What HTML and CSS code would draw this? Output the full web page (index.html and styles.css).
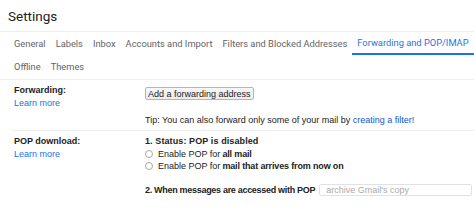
FILE: index.html
```html
<!DOCTYPE html>
<html lang="en">
<head>
<meta charset="UTF-8">
<link rel="stylesheet" href="styles.css">
<title>Settings</title>
</head>
<body>

<div class="title">Settings</div>

<nav class="tabs">
<div class="tabRow">
<a class="tab">General</a>
<a class="tab">Labels</a>
<a class="tab">Inbox</a>
<a class="tab">Accounts and Import</a>
<a class="tab">Filters and Blocked Addresses</a>
<a class="tab active">Forwarding and POP/IMAP</a>
</div>
<div class="tabRow second">
<a class="tab">Offline</a>
<a class="tab">Themes</a>
</div>
</nav>

<div class="section">
<div class="label">
<b>Forwarding:</b>
<a class="learn">Learn more</a>
</div>
<div class="content">
<button class="btn">Add a forwarding address</button>
<p class="tip">Tip: You can also forward only some of your mail by <a class="link">creating a filter!</a></p>
</div>
</div>

<div class="section">
<div class="label">
<b>POP download:</b>
<a class="learn">Learn more</a>
</div>
<div class="content">
<b class="line status">1. Status: POP is disabled</b>
<label class="line radioLine"><span class="radio"></span>Enable POP for <b>all mail</b></label>
<label class="line radioLine"><span class="radio"></span>Enable POP for <b>mail that arrives from now on</b></label>
<div class="whenRow">
<b>2. When messages are accessed with POP</b>
<span class="select">archive Gmail's copy</span>
</div>
</div>
</div>

</body>
</html>
```

FILE: styles.css
```css
*,*:before,*:after{
margin: 0;
padding: 0;
box-sizing: border-box;
}

html,body{
width: 474px;
height: 209px;
overflow: hidden;
background: #fff;
}

body{
font-family: "Liberation Sans", Arial, sans-serif;
font-size: 9px;
color: #222;
}

a{
text-decoration: none;
}


.title{
height: 32px;
padding-left: 8px;
font-family: Roboto, "Open Sans", sans-serif;
font-size: 13.5px;
line-height: 32px;
color: #202124;
border-bottom: 1px solid #eee;
}


.tabs{
padding-left: 9px;
border-bottom: 1px solid #eee;
}

.tabRow{
display: flex;
height: 23px;
}

.tabRow.second{
height: 24px;
}

.tab{
padding: 0 5px;
font-family: Roboto, "Open Sans", sans-serif;
font-size: 9.3px;
line-height: 23px;
color: #5f6368;
white-space: nowrap;
}

.tab.active{
color: #1a73e8;
line-height: 21px;
border-bottom: 2px solid #1a73e8;
}


.section{
display: flex;
margin-left: 12px;
padding: 4px 0 3px;
border-bottom: 1px solid #eee;
}

.section:last-child{
border-bottom: none;
}

.label{
width: 133px;
flex-shrink: 0;
padding-left: 2px;
line-height: 13px;
display: flex;
flex-direction: column;
}

.learn{
color: #1a73e8;
}

.content{
flex: 1;
min-width: 0;
display: flex;
flex-direction: column;
align-items: flex-start;
}

.btn{
margin-top: 3px;
height: 13px;
padding: 0 2px;
font-family: inherit;
font-size: 9px;
color: #222;
background: linear-gradient(#f7f7f7, #ececec);
border: 1px solid #b5b5b5;
border-radius: 2px;
}

.tip{
margin-top: 14px;
line-height: 13px;
}

.link{
color: #15c;
}

.line{
display: block;
line-height: 13px;
}

.status{
letter-spacing: 0.1px;
}

.radioLine{
display: flex;
align-items: center;
line-height: 12px;
}

.radioLine b{
margin-left: 2px;
letter-spacing: -0.15px;
}

.radio{
width: 8px;
height: 8px;
margin-right: 5px;
border: 1px solid #a8a8a8;
border-radius: 50%;
}

.whenRow{
align-self: stretch;
margin-top: 12px;
margin-right: 2px;
display: flex;
align-items: center;
white-space: nowrap;
}

.whenRow b{
letter-spacing: -0.3px;
}

.select{
flex: 1;
min-width: 0;
margin-left: 4px;
height: 12px;
padding-left: 6px;
line-height: 10px;
color: #aaa;
border: 1px solid #e2e2e2;
border-radius: 2px;
overflow: hidden;
}
```
